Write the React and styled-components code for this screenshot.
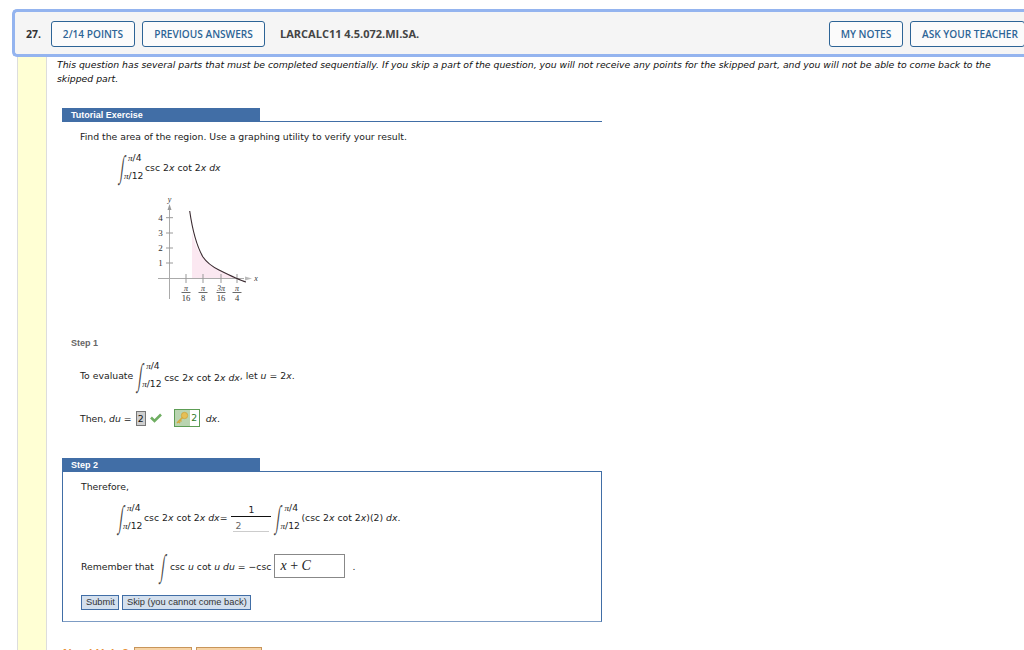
import React from 'react';
import styled, { createGlobalStyle } from 'styled-components';

const GlobalStyle = createGlobalStyle`
  html, body {
    margin: 0;
    height: 650px;
    overflow: hidden;
    background: #fff;
  }
  body {
    font-family: "DejaVu Sans", Verdana, sans-serif;
    font-size: 9.3px;
    color: #222;
  }
`;

const Page = styled.div`
  width: 1024px;
  height: 650px;
  overflow: hidden;
  padding-top: 9px;
  box-sizing: border-box;
`;

const Header = styled.header`
  display: flex;
  align-items: center;
  box-sizing: border-box;
  height: 48px;
  margin-left: 12px;
  width: 1015px;
  padding: 1px 2px 0 11px;
  background: #f5f5f5;
  border: 3px solid #94b4ef;
  border-right: none;
  border-radius: 5px 0 0 5px;
  font-family: "Open Sans", sans-serif;
  font-size: 10.1px;
  font-weight: 600;
`;

const Number = styled.span`
  width: 25px;
  font-weight: 700;
  font-size: 10.5px;
  color: #333;
`;

const HeadButton = styled.span`
  box-sizing: border-box;
  display: flex;
  align-items: center;
  justify-content: center;
  height: 26px;
  width: ${p => p.$w}px;
  margin-left: ${p => p.$gap || 0}px;
  padding-left: ${p => p.$pad || 0}px;
  border: 1px solid #2d6496;
  border-radius: 3px;
  color: #2d6496;
  background: #fbfbfb;
  white-space: nowrap;
`;

const Code = styled.span`
  margin-left: 15px;
  color: #444;
  font-weight: 700;
  font-size: 11px;
  flex: 1;
`;

const Body = styled.div`
  display: flex;
  height: 600px;
  margin-left: 17px;
`;

const Rail = styled.div`
  flex: none;
  width: 28px;
  background: #ffffd4;
  border-left: 1px solid #ddd;
  border-right: 1px solid #ddd;
`;

const Content = styled.main`
  flex: 1;
  padding: 0 0 0 10px;
`;

const Intro = styled.p`
  margin: 1px 0 0;
  width: 950px;
  font-style: italic;
  line-height: 14px;
  color: #111;
`;

const Section = styled.section`
  margin: 22px 0 0 5px;
  width: 540px;
`;

const Tab = styled.div`
  display: flex;
  align-items: center;
  box-sizing: border-box;
  height: 13px;
  padding-left: 9px;
  font-family: "Liberation Sans", Arial, sans-serif;
  font-size: 9px;
  font-weight: 700;
  color: #fff;
  background: #416ea6;
  width: 198px;
`;

const TabRule = styled.div`
  border-top: 1px solid #416ea6;
`;

const Panel = styled.div`
  padding: 8px 0 0 18px;
  height: ${p => p.$h}px;
  box-sizing: border-box;
  ${p => p.$boxed && `
    border-left: 1px solid #416ea6;
    border-right: 1px solid #416ea6;
    border-bottom: 1px solid #7d9cc4;
  `}
`;

const Line = styled.div`
  display: flex;
  align-items: center;
  margin: ${p => p.$top || 0}px 0 0 ${p => p.$left || 0}px;
  height: ${p => p.$h || 12}px;
  white-space: nowrap;
`;

const IntegralBox = styled.span`
  display: inline-grid;
  grid-template-columns: 9px auto;
  grid-template-rows: 15px 15px;
  align-items: center;
  width: 27px;
  height: 30px;
  flex: none;
`;

const Sign = styled.span`
  grid-row: 1 / 3;
  display: block;
  width: ${p => p.$free ? '12px' : 'auto'};
  margin-left: ${p => p.$free ? '4px' : 0};
  font-family: "Liberation Serif", serif;
  font-size: 31px;
  line-height: 30px;
  transform: skewX(-7deg) scaleX(0.42);
  transform-origin: center;
  color: #444;
`;

const Limit = styled.span`
  font-size: 9.2px;
  line-height: 12px;
  color: #222;
  margin-top: ${p => p.$low ? 2 : -3}px;
  margin-left: ${p => p.$low ? -3 : 1}px;
`;

const Pi = styled.i`
  font-family: "Liberation Serif", serif;
`;

const Em = styled.i``;

const Raised = styled.span`
  margin-left: 1px;
  position: relative;
  top: ${p => p.$drop || 0}px;
`;

const Graph = styled.svg`
  display: block;
  margin: 13px 0 0 69px;
`;

const StepLabel = styled.div`
  margin: 31px 0 0 -9px;
  height: 11px;
  line-height: 11px;
  font-family: "Liberation Sans", Arial, sans-serif;
  font-size: 9px;
  font-weight: 700;
  color: #666;
`;

const Given = styled.span`
  box-sizing: border-box;
  display: inline-flex;
  align-items: center;
  justify-content: center;
  width: 10px;
  height: 15px;
  margin-left: 4px;
  background: #cfcfcf;
  border: 1px solid #777;
  color: #111;
`;

const KeyBox = styled.span`
  box-sizing: border-box;
  display: inline-flex;
  width: 26px;
  height: 18px;
  border: 1px solid #5d9d55;
  background: #fff;
  margin-left: 12px;
  margin-right: 6px;
`;

const KeyPart = styled.span`
  display: flex;
  align-items: center;
  justify-content: center;
  width: 15px;
  background: #b9d4b0;
`;

const KeyValue = styled.span`
  flex: 1;
  text-align: center;
  line-height: 16px;
  color: #2f7a2a;
`;

const Fraction = styled.span`
  display: inline-flex;
  flex-direction: column;
  align-items: center;
  width: 40px;
  margin: 0 3px 0 4px;
`;

const Top = styled.span`
  display: block;
  width: 100%;
  text-align: center;
  line-height: 13px;
  border-bottom: 1px solid #111;
`;

const Bottom = styled.span`
  box-sizing: border-box;
  width: 36px;
  height: 15px;
  padding: 3px 0 0 2px;
  color: #666;
  border-bottom: 1px solid #ccc;
`;

const Answer = styled.span`
  box-sizing: border-box;
  display: flex;
  align-items: center;
  width: 71px;
  height: 24px;
  margin-left: 3px;
  padding-left: 5px;
  border: 1px solid #888;
  font-family: "Liberation Serif", serif;
  font-size: 14px;
  color: #222;
`;

const Dot = styled.span`
  margin-left: 7px;
`;

const Actions = styled.div`
  display: flex;
  gap: 3px;
  margin-top: 17px;
`;

const SubmitButton = styled.span`
  box-sizing: border-box;
  height: 15px;
  padding: 0 3px 0 4px;
  line-height: 13px;
  font-family: "Liberation Sans", Arial, sans-serif;
  font-size: 9.3px;
  color: #333;
  background: #d4e0ee;
  border: 1px solid #416ea6;
`;

const Help = styled.div`
  display: flex;
  align-items: flex-start;
  margin-top: 25px;
  font-family: "Liberation Sans", Arial, sans-serif;
  font-weight: 700;
  font-size: 12px;
  color: #e8923a;
`;

const HelpLabel = styled.span`
  width: 72px;
  margin-top: 1px;
  padding-left: 1px;
  box-sizing: border-box;
  line-height: 12px;
`;

const HelpButton = styled.span`
  box-sizing: border-box;
  height: 20px;
  width: ${p => p.$w}px;
  margin-right: 4px;
  background: #f3efe6;
  border: 1px solid #c8955a;
  box-shadow: inset 0 0 0 2px #f6d3a5;
`;

const Integral = () => (
  <IntegralBox>
    <Sign>∫</Sign>
    <Limit><Pi>π</Pi>/4</Limit>
    <Limit $low><Pi>π</Pi>/12</Limit>
  </IntegralBox>
);

const Expr = () => (
  <span>csc 2<Em>x</Em> cot 2<Em>x</Em> <Em>dx</Em></span>
);

const AreaGraph = () => {
  const serif = { fontFamily: '"Liberation Serif", serif', fill: '#333' };
  const xTicks = [
    { x: 37, n: 'π', d: '16' },
    { x: 54, n: 'π', d: '8' },
    { x: 72, n: '3π', d: '16' },
    { x: 88, n: 'π', d: '4' },
  ];
  const yTicks = [22.7, 38, 53, 68];
  return (
    <Graph width="115" height="112" viewBox="0 0 115 112">
      <path d="M43 37 C46 50 49 56 54 62 C58 68 64 72 70 75 C78 79 84 81 90 83.7 L43 83.7 Z" fill="#fbe8f1" />
      <line x1="9" y1="83.5" x2="95" y2="83.5" stroke="#aaa" />
      <line x1="20.5" y1="14" x2="20.5" y2="104" stroke="#aaa" />
      <path d="M20.5 9 L18.5 15 L22.5 15 Z" fill="#999" />
      <path d="M103 83.5 L96 81.5 L96 85.5 Z" fill="#bbb" />
      {yTicks.map((y, i) => (
        <g key={y}>
          <line x1="17" y1={y} x2="24" y2={y} stroke="#999" />
          <text x="11.5" y={y + 3} fontSize="9" style={serif} textAnchor="middle">{4 - i}</text>
        </g>
      ))}
      {xTicks.map(t => (
        <g key={t.x}>
          <line x1={t.x} y1="79" x2={t.x} y2="88" stroke="#999" />
          <text x={t.x} y="96" fontSize="8" style={serif} textAnchor="middle" fontStyle="italic">{t.n}</text>
          <line x1={t.x - 4.5} y1="97.5" x2={t.x + 4.5} y2="97.5" stroke="#444" strokeWidth="0.8" />
          <text x={t.x} y="106" fontSize="8.5" style={serif} textAnchor="middle">{t.d}</text>
        </g>
      ))}
      <path d="M40.7 16 C43 32 47 50 54 62 C58 68 64 72 70 75 C80 80 90 85 97 87" fill="none" stroke="#3a2a30" strokeWidth="1.1" />
      <text x="20.5" y="7" fontSize="8" style={serif} fontStyle="italic" textAnchor="middle">y</text>
      <text x="107" y="86" fontSize="8" style={serif} fontStyle="italic" textAnchor="middle">x</text>
    </Graph>
  );
};

const Check = () => (
  <svg width="12" height="10" viewBox="0 0 12 10" style={{ marginLeft: 4 }}>
    <path d="M1 4.5 L4.5 8 L11 1.5" fill="none" stroke="#6fae62" strokeWidth="2.6" />
  </svg>
);

const KeyIcon = () => (
  <svg width="14" height="14" viewBox="0 0 14 14">
    <circle cx="9.5" cy="4.5" r="3.2" fill="#e6bf55" stroke="#c79a30" strokeWidth="0.6" />
    <path d="M7.5 6.5 L2 12 M3.5 10.5 L5 12 M5 9 L6.5 10.5" stroke="#d4a93c" strokeWidth="1.6" fill="none" />
  </svg>
);

export default function App() {
  return (
    <Page>
      <GlobalStyle />
      <Header>
        <Number>27.</Number>
        <HeadButton $w={84}>2/14 POINTS</HeadButton>
        <HeadButton $w={123} $gap={7}>PREVIOUS ANSWERS</HeadButton>
        <Code>LARCALC11 4.5.072.MI.SA.</Code>
        <HeadButton $w={74}>MY NOTES</HeadButton>
        <HeadButton $w={115} $gap={7} $pad={5}>ASK YOUR TEACHER</HeadButton>
      </Header>
      <Body>
        <Rail />
        <Content>
          <Intro>
            This question has several parts that must be completed sequentially. If you skip a part of the question, you will not receive any points for the skipped part, and you will not be able to come back to the skipped part.
          </Intro>
          <Section>
            <Tab>Tutorial Exercise</Tab>
            <TabRule />
            <Panel $h={336}>
              <Line>Find the area of the region. Use a graphing utility to verify your result.</Line>
              <Line $left={38} $top={10} $h={30}><Integral /><Expr /></Line>
              <AreaGraph />
              <StepLabel>Step 1</StepLabel>
              <Line $top={11} $h={30}>
                To evaluate&nbsp;
                <Integral />
                <Raised $drop={2}><Expr /></Raised>,&nbsp;let <Em>&nbsp;u</Em>&nbsp;=&nbsp;2<Em>x</Em>.
              </Line>
              <Line $top={19} $h={18}>
                Then,&nbsp;<Em>du</Em>&nbsp;=
                <Given>2</Given>
                <Check />
                <KeyBox><KeyPart><KeyIcon /></KeyPart><KeyValue>2</KeyValue></KeyBox>
                <Em>dx</Em>.
              </Line>
            </Panel>
            <Tab>Step 2</Tab>
            <TabRule />
            <Panel $boxed $h={150}>
              <Line>Therefore,</Line>
              <Line $left={36} $top={10} $h={30}>
                <Integral /><Expr />=
                <Fraction><Top>1</Top><Bottom>2</Bottom></Fraction>
                <Integral />
                <span>(csc 2<Em>x</Em> cot 2<Em>x</Em>)(2) <Em>dx</Em>.</span>
              </Line>
              <Line $top={22} $h={24}>
                Remember that
                <Sign $free>∫</Sign>
                <span>csc <Em>u</Em> cot <Em>u</Em> <Em>du</Em> = −csc</span>
                <Answer><i>x</i>&nbsp;+&nbsp;<i>C</i></Answer>
                <Dot>.</Dot>
              </Line>
              <Actions>
                <SubmitButton>Submit</SubmitButton>
                <SubmitButton>Skip (you cannot come back)</SubmitButton>
              </Actions>
            </Panel>
            <Help>
              <HelpLabel>Need Help?</HelpLabel>
              <HelpButton $w={58} />
              <HelpButton $w={66} />
            </Help>
          </Section>
        </Content>
      </Body>
    </Page>
  );
}
